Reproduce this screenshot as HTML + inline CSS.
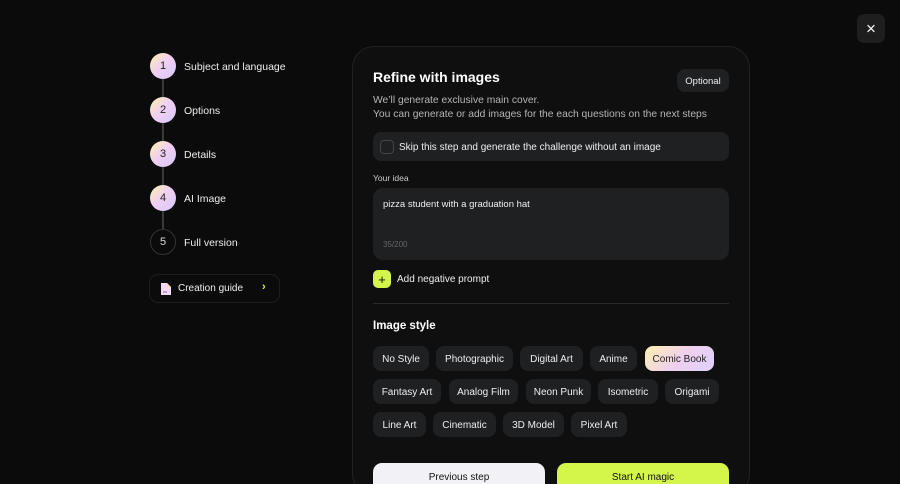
<!DOCTYPE html>
<html><head><style>
*{box-sizing:border-box;margin:0;padding:0}
html,body{width:900px;height:484px;overflow:hidden}
body{background:#0b0b0b;font-family:"Liberation Sans",sans-serif;color:#eee;position:relative}
.abs{position:absolute}
.step{position:absolute;left:150px;display:flex;align-items:center}
.circ{width:26px;height:26px;border-radius:50%;background:linear-gradient(135deg,#fff3a8 0%,#f0d0f0 45%,#d8c8ff 100%);color:#222;font-size:11px;display:flex;align-items:center;justify-content:center}
.circ.off{background:#0b0b0b;border:1px solid #333;color:#ddd}
.step span{margin-left:8px;font-size:10.5px;color:#eee;padding-top:1px}
.line{position:absolute;left:162px;width:2px;background:#3a3a3a}
.card{position:absolute;left:352px;top:46px;width:398px;height:450px;border:1px solid #222;border-radius:22px;background:#0f0f0f}
.chip{position:absolute;height:25px;border-radius:8px;background:#1f2022;color:#eee;font-size:10px;display:flex;align-items:center;justify-content:center;padding-top:1px}
</style></head><body>
<div class="abs" style="left:857px;top:14px;width:28px;height:29px;border-radius:7px;background:#1e1e1e"><svg width="28" height="29"><path d="M11 11.5l6 6M17 11.5l-6 6" stroke="#eee" stroke-width="1.3" stroke-linecap="round"/></svg></div>

<div class="line" style="top:79px;height:150px"></div>
<div class="step" style="top:53px"><div class="circ">1</div><span>Subject and language</span></div>
<div class="step" style="top:97px"><div class="circ">2</div><span>Options</span></div>
<div class="step" style="top:141px"><div class="circ">3</div><span>Details</span></div>
<div class="step" style="top:185px"><div class="circ">4</div><span>AI Image</span></div>
<div class="step" style="top:229px"><div class="circ off">5</div><span>Full version</span></div>
<div class="abs" style="left:149px;top:274px;width:131px;height:29px;border:1px solid #1e1e1e;border-radius:9px;display:flex;align-items:center;padding-left:11px">
<svg width="10" height="12"><path d="M0 0h6l4 4v8H0z" fill="#f3d8f5"/><path d="M6 0l4 4H6z" fill="#f3e38c"/><rect x="2" y="8" width="4" height="2" fill="#c0a0e0"/></svg>
<span style="margin-left:7px;font-size:10px">Creation guide</span>
<span style="position:absolute;left:112px;top:6px;color:#d4f54a;font-size:11px;font-weight:bold">›</span></div>

<div class="card"></div>
<div class="abs" style="left:373px;top:69px;font-size:14px;font-weight:bold;color:#fff">Refine with images</div>
<div class="abs" style="left:677px;top:69px;width:52px;height:23px;border-radius:8px;background:#1f2022;font-size:9.5px;display:flex;align-items:center;justify-content:center;padding-top:1px">Optional</div>
<div class="abs" style="left:373px;top:94px;font-size:10.3px;color:#b5b5b5;line-height:14px">We’ll generate exclusive main cover.<br>You can generate or add images for the each questions on the next steps</div>
<div class="abs" style="left:373px;top:132px;width:356px;height:29px;border-radius:8px;background:#1f2022;display:flex;align-items:center;padding-left:7px">
<div style="width:14px;height:14px;border:1px solid #444;border-radius:4px"></div>
<span style="margin-left:5px;font-size:10px;color:#eee;padding-top:1px">Skip this step and generate the challenge without an image</span></div>
<div class="abs" style="left:373px;top:173px;font-size:8.5px;color:#ccc">Your idea</div>
<div class="abs" style="left:373px;top:188px;width:356px;height:72px;border-radius:10px;background:#1f2022">
<div style="position:absolute;left:10px;top:11px;font-size:9.5px;color:#eee">pizza student with a graduation hat</div>
<div style="position:absolute;left:10px;top:52px;font-size:8px;color:#666">35/200</div></div>
<div class="abs" style="left:373px;top:270px;width:18px;height:18px;border-radius:5px;background:#d4f54a;color:#111;font-size:13px;display:flex;align-items:center;justify-content:center">+</div>
<div class="abs" style="left:397px;top:274px;font-size:10px;color:#eee">Add negative prompt</div>
<div class="abs" style="left:373px;top:303px;width:356px;height:1px;background:#2a2a2a"></div>
<div class="abs" style="left:373px;top:320px;font-size:11.5px;font-weight:bold;color:#fff">Image style</div>

<div class="chip" style="left:373px;top:346px;width:56px">No Style</div>
<div class="chip" style="left:436px;top:346px;width:77px">Photographic</div>
<div class="chip" style="left:520px;top:346px;width:63px">Digital Art</div>
<div class="chip" style="left:590px;top:346px;width:47px">Anime</div>
<div class="chip" style="left:645px;top:346px;width:69px;background:linear-gradient(135deg,#fff0b0,#f0d0ec 50%,#dcd0ff);color:#222">Comic Book</div>
<div class="chip" style="left:373px;top:379px;width:68px">Fantasy Art</div>
<div class="chip" style="left:449px;top:379px;width:69px">Analog Film</div>
<div class="chip" style="left:526px;top:379px;width:65px">Neon Punk</div>
<div class="chip" style="left:598px;top:379px;width:60px">Isometric</div>
<div class="chip" style="left:665px;top:379px;width:54px">Origami</div>
<div class="chip" style="left:373px;top:412px;width:53px">Line Art</div>
<div class="chip" style="left:433px;top:412px;width:63px">Cinematic</div>
<div class="chip" style="left:503px;top:412px;width:61px">3D Model</div>
<div class="chip" style="left:571px;top:412px;width:56px">Pixel Art</div>

<div class="abs" style="left:373px;top:463px;width:172px;height:30px;border-radius:9px;background:#f2f2f6;color:#111;font-size:10px;display:flex;justify-content:center;padding-top:9px">Previous step</div>
<div class="abs" style="left:557px;top:463px;width:172px;height:30px;border-radius:9px;background:#d4f54a;color:#111;font-size:10px;display:flex;justify-content:center;padding-top:9px">Start AI magic</div>
</body></html>
